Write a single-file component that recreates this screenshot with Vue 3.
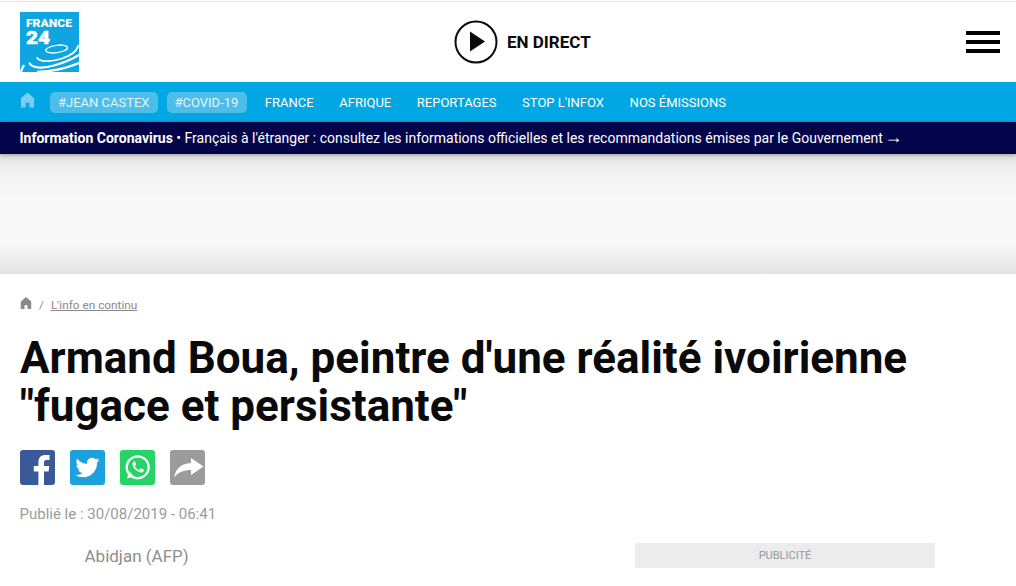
<script setup>
const navItems = ['FRANCE', 'AFRIQUE', 'REPORTAGES', "STOP L'INFOX", 'NOS ÉMISSIONS']
const tags = ['#JEAN CASTEX', '#COVID-19']
</script>

<template>
  <div class="page">
    <div class="topline"></div>
    <header class="head">
      <svg class="logo" viewBox="0 0 59 60" width="59" height="60">
        <rect width="59" height="60" fill="#0ea5e0" />
        <text x="6" y="15" class="logo-a" textLength="46" lengthAdjust="spacingAndGlyphs">FRANCE</text>
        <text x="6" y="32" class="logo-b" textLength="24" lengthAdjust="spacingAndGlyphs">24</text>
        <g fill="none" stroke="#fff">
          <ellipse cx="36.7" cy="37" rx="11" ry="3.7" stroke-width="1.3" transform="rotate(-8 36.7 37)" />
          <path d="M16.7 45.3 C19 50 30 50.5 42 46.5 C50 44 57 39 58.5 33" stroke-width="1.8" />
          <path d="M9.3 50.5 C11 56 22 57 34 53.5 C43 51 52 47.5 59 43" stroke-width="2.2" />
          <path d="M4 53 C2.5 55.5 1.5 57.5 1 60 M17 60 C30 59.5 47 56 59 51" stroke-width="2.4" />
        </g>
      </svg>
      <div class="live">
        <svg width="44" height="44" viewBox="0 0 44 44">
          <circle cx="22" cy="22" r="20.5" fill="none" stroke="#0a0a0a" stroke-width="2" />
          <path d="M16 11.5 L31 21.5 L16 31.5 Z" fill="#0a0a0a" />
        </svg>
        <span>EN DIRECT</span>
      </div>
      <div class="burger"><i></i><i></i><i></i></div>
    </header>

    <nav class="nav">
      <svg class="home" viewBox="0 0 16 16" width="15" height="16">
        <path d="M8 0 L15 6 V16 H10 V11 H6 V16 H1 V6 Z" fill="#7fcdf0" />
      </svg>
      <a v-for="t in tags" :key="t" class="tag">{{ t }}</a>
      <a v-for="n in navItems" :key="n" class="item">{{ n }}</a>
    </nav>

    <div class="alert">
      <b>Information Coronavirus</b>&nbsp;• Français à l'étranger : consultez les informations officielles et les recommandations émises par le Gouvernement <span class="arrow">→</span>
    </div>

    <div class="ad"></div>

    <main class="main">
      <div class="crumb">
        <svg viewBox="0 0 16 16" width="12" height="14">
          <path d="M8 0 L15 6 V16 H10 V11 H6 V16 H1 V6 Z" fill="#8a8a8a" />
        </svg>
        <span class="slash">/</span>
        <a>L'info en continu</a>
      </div>

      <h1>Armand Boua, peintre d'une réalité ivoirienne "fugace et persistante"</h1>

      <div class="share">
        <svg class="sb" viewBox="0 0 35 35"><rect width="35" height="35" rx="3" fill="#3b5998" />
          <path d="M24 35 V21.5 H28.6 L29.3 16 H24 V12.6 C24 11 24.5 9.9 26.8 9.9 H29.5 V5.1 C29 5 27.4 4.9 25.4 4.9 C21.2 4.9 18.4 7.4 18.4 12 V16 H13.8 V21.5 H18.4 V35 Z" fill="#fff" /></svg>
        <svg class="sb" viewBox="0 0 35 35"><rect width="35" height="35" rx="3" fill="#1da1dc" />
          <g transform="translate(5.5 5.5)"><path d="M24 4.56c-.88.39-1.83.65-2.83.77 1.02-.61 1.8-1.58 2.17-2.72-.95.56-2 .97-3.13 1.2A4.92 4.92 0 0 0 11.84 8.3 13.98 13.98 0 0 1 1.67 3.15a4.92 4.92 0 0 0 1.52 6.57c-.8-.03-1.56-.25-2.23-.62v.06a4.93 4.93 0 0 0 3.95 4.83c-.72.2-1.48.22-2.22.08a4.93 4.93 0 0 0 4.6 3.42A9.87 9.87 0 0 1 0 19.54a13.94 13.94 0 0 0 7.55 2.21c9.06 0 14.01-7.5 14.01-14.01l-.02-.64c.96-.69 1.8-1.56 2.46-2.54z" fill="#fff" /></g></svg>
        <svg class="sb" viewBox="0 0 35 35"><rect width="35" height="35" rx="3" fill="#25d366" />
          <circle cx="17.7" cy="17.3" r="11" fill="none" stroke="#fff" stroke-width="2.2" />
          <path d="M7 28.5 L9 21 L14 26.5 Z" fill="#fff" />
          <path d="M13.7 11.6 C13 12.2 12.4 13.2 12.6 14.7 C12.9 16.6 14.3 18.7 15.9 20.1 C17.6 21.6 19.6 22.6 21.3 22.6 C22.7 22.6 23.6 21.6 23.8 20.6 C23.9 20 23.8 19.8 23.5 19.6 L21 18.4 C20.7 18.3 20.4 18.3 20.2 18.6 L19.3 19.7 C19 20 18.8 20 18.4 19.8 C17 19.1 15.8 18 15 16.5 C14.8 16.2 14.9 16 15.1 15.8 L15.9 14.8 C16.1 14.6 16.1 14.3 16 14 L15 11.7 C14.7 11.2 14.2 11.2 13.7 11.6 Z" fill="#fff" /></svg>
        <svg class="sb" viewBox="0 0 35 35"><rect width="35" height="35" rx="3" fill="#9b9b9b" />
          <path d="M20.5 8 L33 16.5 L20.5 25 V20 C13.5 20 8 22 3.5 27.5 C5 19 10.5 13.5 20.5 13 Z" transform="translate(0.5 0)" fill="#fff" /></svg>
      </div>

      <div class="date">Publié le : 30/08/2019 - 06:41</div>

      <div class="lower">
        <div class="dateline">Abidjan (AFP)</div>
        <div class="pub">PUBLICITÉ</div>
      </div>
    </main>
  </div>
</template>

<style>
html, body { margin: 0; background: #fff; }
</style>

<style scoped>
.page {
  width: 1016px;
  height: 586px;
  overflow: hidden;
  font-family: Roboto, "Liberation Sans", sans-serif;
  background: #fff;
}
.topline { height: 1px; margin-top: 1px; background: #e4e4e4; }
.head {
  height: 80px;
  display: flex;
  align-items: center;
  justify-content: space-between;
  padding: 0 16px 0 20px;
  position: relative;
}
.logo { display: block; margin-top: -1px; }
.logo-a { font: 900 11.5px Roboto, sans-serif; fill: #fff; }
.logo-b { font: 900 19px Roboto, sans-serif; fill: #fff; stroke: #fff; stroke-width: 0.5px; }
.live {
  position: absolute;
  left: 454px;
  top: 18px;
  display: flex;
  align-items: center;
  gap: 9px;
  font-size: 17px;
  font-weight: 700;
  color: #0a0a0a;
}
.burger { display: flex; flex-direction: column; gap: 5px; width: 34px; margin-top: -1px; }
.burger i { display: block; height: 4px; background: #000; }
.nav {
  height: 40px;
  background: #00a7e3;
  display: flex;
  align-items: center;
  padding-left: 20px;
  font-size: 13px;
  color: #fff;
}
.home { margin-right: 15px; margin-top: -4px; }
.tag {
  background: #4dbeea;
  border-radius: 5px;
  height: 21px;
  line-height: 21px;
  padding: 0 8px;
  margin-right: 9px;
  color: #e3f5fc;
}
.tag:nth-of-type(2) { margin-right: 18px; padding-right: 8.5px; }
.item { margin-right: 25.6px; }
.alert {
  height: 32px;
  line-height: 32px;
  background: #04044a;
  color: #fff;
  font-size: 14px;
  padding-left: 19.5px;
  white-space: nowrap;
  box-shadow: 0 1px 4px rgba(0, 0, 0, .3);
  position: relative;
}
.alert b { font-weight: 700; }
.arrow { font-family: "Liberation Sans", sans-serif; font-size: 18px; line-height: 14px; margin-left: -2px; }
.ad {
  height: 120px;
  background: linear-gradient(#dedede 0, #efefef 10%, #f8f8f8 35%, #f8f8f8 75%, #e2e2e2 100%);
}
.main { padding: 0 20px; position: relative; }
.crumb {
  display: flex;
  align-items: center;
  height: 20px;
  margin-top: 21px;
  font-size: 11.8px;
  color: #8a8a8a;
}
.crumb svg { margin-top: -5px; }
.slash { margin: 0 7px 0 7px; }
.crumb a { text-decoration: underline; }
h1 {
  margin: 19px 0 0;
  font-size: 44px;
  line-height: 48px;
  font-weight: 700;
  color: #0a0a0a;
  width: 920px;
}
.share { display: flex; gap: 15px; margin-top: 20px; }
.sb { width: 35px; height: 35px; display: block; }
.date { margin-top: 19px; font-size: 15px; line-height: 20px; color: #9b9b9b; margin-left: -0.5px; }
.lower { position: relative; margin-top: 20px; height: 60px; }
.dateline { margin-left: 64.5px; font-size: 17px; line-height: 24px; color: #8e8e8e; }
.pub {
  position: absolute;
  left: 615px;
  top: -1px;
  width: 300px;
  height: 25px;
  line-height: 25px;
  background: #ececec;
  color: #999;
  font-size: 11px;
  text-align: center;
}
</style>
